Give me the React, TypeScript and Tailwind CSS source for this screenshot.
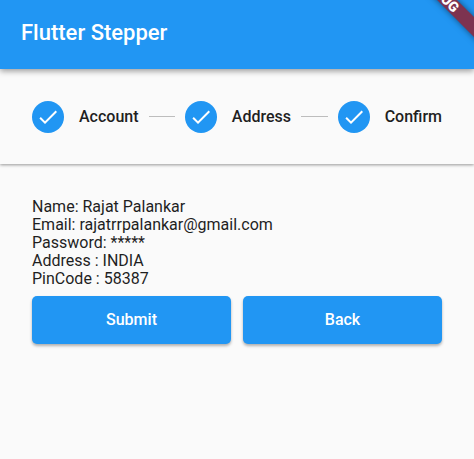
import { useState, FormEvent } from 'react';

const steps = ['Account', 'Address', 'Confirm'];

const details = [
  { label: 'Name: ', value: 'Rajat Palankar' },
  { label: 'Email: ', value: 'rajatrrpalankar@gmail.com' },
  { label: 'Password: ', value: '*****' },
  { label: 'Address : ', value: 'INDIA' },
  { label: 'PinCode : ', value: '58387' },
];

const buttonClass =
  'flex-1 h-12 rounded-[5px] bg-[#2196f3] text-white text-base font-medium shadow-[0_2px_3px_rgba(0,0,0,0.3)] hover:bg-[#1e88e5]';

function CheckIcon() {
  return (
    <svg viewBox="0 0 24 24" className="w-6 h-6" fill="#ffffff" aria-hidden="true">
      <path d="M9 16.17L4.83 12l-1.42 1.41L9 19 21 7l-1.41-1.41z" />
    </svg>
  );
}

// Corner ribbon, its upper half runs off the top of the screen
function DebugBanner() {
  return (
    <div className="absolute top-0 right-0 w-16 h-16 overflow-hidden pointer-events-none">
      <div className="absolute -top-[13px] -right-[39px] w-36 h-3.5 rotate-45 bg-[#7d3350] shadow-[0_0_6px_rgba(0,0,0,0.5)] text-white text-sm leading-[14px] font-black text-center">
        DEBUG
      </div>
    </div>
  );
}

export default function App() {
  const [current, setCurrent] = useState(steps.length - 1);

  const handleSubmit = (e: FormEvent) => {
    e.preventDefault();
    setCurrent(steps.length - 1);
  };

  return (
    <div className="min-h-screen bg-[#fafafa] font-['Roboto',sans-serif] text-[#1f1f1f]">
      {/* App bar */}
      <header className="relative z-10 flex items-center h-[69px] px-[21px] pb-1 bg-[#2196f3] shadow-[0_2px_6px_rgba(0,0,0,0.4)]">
        <h1 className="text-[22px] leading-7 font-medium text-white">Flutter Stepper</h1>
        <DebugBanner />
      </header>

      {/* Steps */}
      <ol className="flex items-center h-[95px] px-8 shadow-[0_1px_3px_rgba(0,0,0,0.4)]">
        {steps.map((step, index) => (
          <li
            key={step}
            className="flex items-center not-last:flex-1"
            aria-current={index === current ? 'step' : undefined}
          >
            <span className="flex items-center justify-center w-8 h-8 rounded-full bg-[#2196f3]">
              <CheckIcon />
            </span>
            <span className="ml-[15px] text-base font-medium">{step}</span>
            {index < steps.length - 1 && <span className="flex-1 h-px mx-2.5 bg-[#bdbdbd]" />}
          </li>
        ))}
      </ol>

      {/* Summary of the entered data */}
      <form onSubmit={handleSubmit} className="px-8 pt-[34px]">
        <div className="text-base leading-[18px]">
          {details.map((item) => (
            <p key={item.label}>
              {item.label}
              {item.value}
            </p>
          ))}
        </div>

        <div className="flex gap-3 mt-2">
          <button type="submit" className={buttonClass}>
            Submit
          </button>
          <button
            type="button"
            onClick={() => setCurrent(Math.max(0, current - 1))}
            className={buttonClass}
          >
            Back
          </button>
        </div>
      </form>
    </div>
  );
}
